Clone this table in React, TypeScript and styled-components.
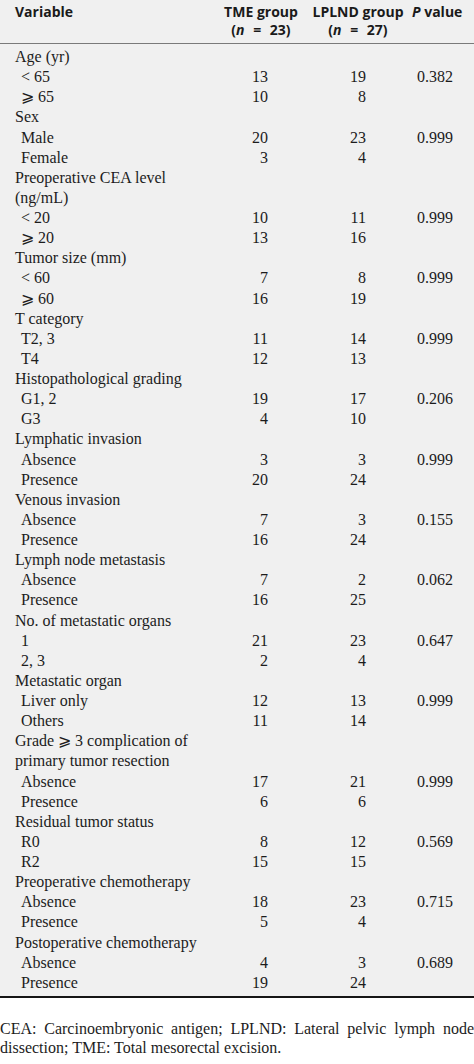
import React from "react"
import styled, { createGlobalStyle } from "styled-components"

const GlobalStyle = createGlobalStyle`
  html, body {
    margin: 0;
    padding: 0;
    background: #ffffff;
  }
`

type Row = {
  label: string
  sub?: boolean
  tme?: string
  lplnd?: string
  p?: string
}

const GE = "\u2A7E"

const rows: Row[] = [
  { label: "Age (yr)" },
  { label: "< 65", sub: true, tme: "13", lplnd: "19", p: "0.382" },
  { label: `${GE} 65`, sub: true, tme: "10", lplnd: "8" },
  { label: "Sex" },
  { label: "Male", sub: true, tme: "20", lplnd: "23", p: "0.999" },
  { label: "Female", sub: true, tme: "3", lplnd: "4" },
  { label: "Preoperative CEA level" },
  { label: "(ng/mL)" },
  { label: "< 20", sub: true, tme: "10", lplnd: "11", p: "0.999" },
  { label: `${GE} 20`, sub: true, tme: "13", lplnd: "16" },
  { label: "Tumor size (mm)" },
  { label: "< 60", sub: true, tme: "7", lplnd: "8", p: "0.999" },
  { label: `${GE} 60`, sub: true, tme: "16", lplnd: "19" },
  { label: "T category" },
  { label: "T2, 3", sub: true, tme: "11", lplnd: "14", p: "0.999" },
  { label: "T4", sub: true, tme: "12", lplnd: "13" },
  { label: "Histopathological grading" },
  { label: "G1, 2", sub: true, tme: "19", lplnd: "17", p: "0.206" },
  { label: "G3", sub: true, tme: "4", lplnd: "10" },
  { label: "Lymphatic invasion" },
  { label: "Absence", sub: true, tme: "3", lplnd: "3", p: "0.999" },
  { label: "Presence", sub: true, tme: "20", lplnd: "24" },
  { label: "Venous invasion" },
  { label: "Absence", sub: true, tme: "7", lplnd: "3", p: "0.155" },
  { label: "Presence", sub: true, tme: "16", lplnd: "24" },
  { label: "Lymph node metastasis" },
  { label: "Absence", sub: true, tme: "7", lplnd: "2", p: "0.062" },
  { label: "Presence", sub: true, tme: "16", lplnd: "25" },
  { label: "No. of metastatic organs" },
  { label: "1", sub: true, tme: "21", lplnd: "23", p: "0.647" },
  { label: "2, 3", sub: true, tme: "2", lplnd: "4" },
  { label: "Metastatic organ" },
  { label: "Liver only", sub: true, tme: "12", lplnd: "13", p: "0.999" },
  { label: "Others", sub: true, tme: "11", lplnd: "14" },
  { label: `Grade ${GE} 3 complication of` },
  { label: "primary tumor resection" },
  { label: "Absence", sub: true, tme: "17", lplnd: "21", p: "0.999" },
  { label: "Presence", sub: true, tme: "6", lplnd: "6" },
  { label: "Residual tumor status" },
  { label: "R0", sub: true, tme: "8", lplnd: "12", p: "0.569" },
  { label: "R2", sub: true, tme: "15", lplnd: "15" },
  { label: "Preoperative chemotherapy" },
  { label: "Absence", sub: true, tme: "18", lplnd: "23", p: "0.715" },
  { label: "Presence", sub: true, tme: "5", lplnd: "4" },
  { label: "Postoperative chemotherapy" },
  { label: "Absence", sub: true, tme: "4", lplnd: "3", p: "0.689" },
  { label: "Presence", sub: true, tme: "19", lplnd: "24" },
]

const COLS = "222px 78px 104px 70px"

const Page = styled.div`
  width: 474px;
  font-family: "Liberation Serif", "DejaVu Serif", serif;
  color: #1c1c1c;
`

const Table = styled.div`
  background: #f0f0f0;
  border-bottom: 2px solid #161616;
`

const Head = styled.div`
  display: grid;
  grid-template-columns: ${COLS};
  padding: 3px 0 4px;
  border-bottom: 1px solid #7a7a7a;
  font-family: "Open Sans", "DejaVu Sans", sans-serif;
  font-weight: 700;
  font-size: 14px;
  line-height: 18px;
  color: #1a1a1a;
`

const HeadCell = styled.div<{ $left?: number; $align?: "left" | "center" }>`
  text-align: ${(p) => p.$align ?? "center"};
  padding-left: ${(p) => p.$left ?? 0}px;
  white-space: nowrap;
`

const Count = styled.span`
  word-spacing: 5px;
`

const Body = styled.div`
  padding: 3px 0 3px;
`

const BodyRow = styled.div`
  display: grid;
  grid-template-columns: ${COLS};
  height: 20.13px;
  font-size: 16px;
  line-height: 20.13px;
`

const Label = styled.div<{ $sub?: boolean }>`
  padding-left: ${(p) => (p.$sub ? 21 : 15)}px;
  white-space: nowrap;
`

const Num = styled.div<{ $pad: number }>`
  text-align: right;
  padding-right: ${(p) => p.$pad}px;
`

const Footnote = styled.p`
  margin: 0;
  padding: 21px 0 0;
  font-size: 16px;
  line-height: 19px;
  text-align: justify;
  color: #1c1c1c;
`

export default function App() {
  return (
    <>
      <GlobalStyle />
      <Page>
        <Table>
          <Head>
            <HeadCell $align="left" $left={15}>
              Variable
            </HeadCell>
            <HeadCell $left={-3}>
              TME group
              <br />
              <Count>
                (<i>n</i> = 23)
              </Count>
            </HeadCell>
            <HeadCell $left={12}>
              LPLND group
              <br />
              <Count>
                (<i>n</i> = 27)
              </Count>
            </HeadCell>
            <HeadCell $align="left" $left={8}>
              <i>P</i> value
            </HeadCell>
          </Head>
          <Body>
            {rows.map((r, i) => (
              <BodyRow key={i}>
                <Label $sub={r.sub}>{r.label}</Label>
                <Num $pad={32}>{r.tme}</Num>
                <Num $pad={38}>{r.lplnd}</Num>
                <Num $pad={21}>{r.p}</Num>
              </BodyRow>
            ))}
          </Body>
        </Table>
        <Footnote>
          CEA: Carcinoembryonic antigen; LPLND: Lateral pelvic lymph node
          dissection; TME: Total mesorectal excision.
        </Footnote>
      </Page>
    </>
  )
}
